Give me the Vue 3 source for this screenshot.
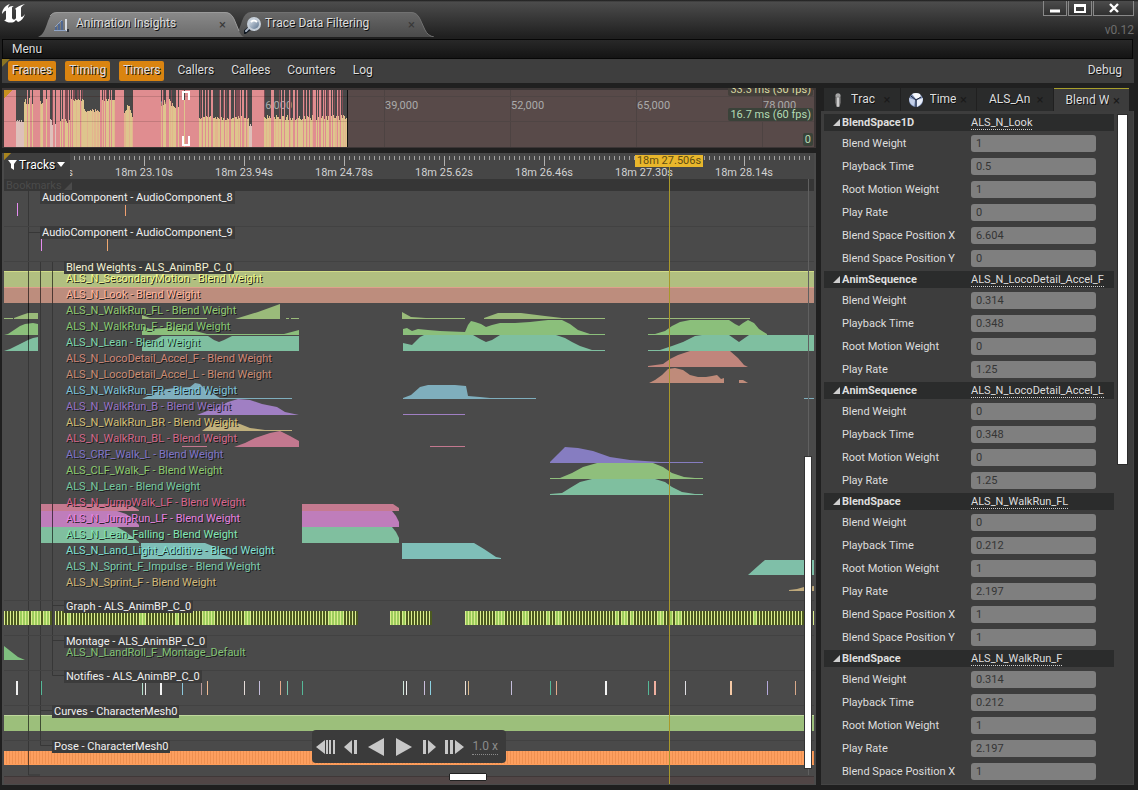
<script setup>
import { ref } from 'vue'

const toolbar = ref([
  { name: 'Frames', on: true },
  { name: 'Timing', on: true },
  { name: 'Timers', on: true },
  { name: 'Callers', on: false },
  { name: 'Callees', on: false },
  { name: 'Counters', on: false },
  { name: 'Log', on: false },
])

/* ---- frame overview: one-pixel columns, either over budget or within it ---- */
const frameSections = [
  [0, 12, 0.95, 30, 2], [12, 20, 0, 30, 2, 'pale'], [20, 46, 0.6, 8, 6], [46, 52, 0.3, 28, 8, 'pale'],
  [52, 67, 0.55, 28, 6], [67, 80, 0.35, 8, 3], [80, 96, 0.05, 19, 3], [96, 98, 1, 8, 1],
  [98, 111, 0.3, 9, 3], [111, 122, 0.85, 20, 10], [122, 131, 0.05, 15, 12], [131, 157, 1, 0, 1],
  [157, 178, 0.45, 8, 10], [178, 195, 0.85, 8, 3], [195, 245, 0.38, 26, 4], [245, 248, 0, 32, 5, 'pale'],
  [248, 260, 0.75, 22, 4], [260, 344, 0.26, 25, 5],
]
const columns = []
let seed = 11
const rand = () => {
  seed = (seed * 16807) % 2147483647
  return seed / 2147483647
}
for (const [from, to, share, top, spread, tone] of frameSections) {
  for (let x = from; x < to; x++) {
    const y = Math.round(top + rand() * spread)
    if (rand() < share) columns.push({ x, y: 0, c: '#e08d90' })
    else {
      columns.push({ x, y, c: tone ? '#dec0bb' : rand() < 0.3 ? '#e3b58d' : '#dec58d' })
      if (share > 0.25 && rand() < 0.25) columns.push({ x, y: 0, h: y, c: '#7d4c54' })
    }
  }
}
const overviewMarks = [
  { x: 129, t: '13,000' }, { x: 255, t: '26,000' }, { x: 381, t: '39,000' },
  { x: 507, t: '52,000' }, { x: 633, t: '65,000' }, { x: 759, t: '78,000' },
]

/* ---- time ruler ---- */
const minorTicks = Array.from({ length: 148 }, (_, i) => 70 + i * 5)
const majorTicks = [
  [40, '18m 22.26s'], [140, '18m 23.10s'], [240, '18m 23.94s'], [340, '18m 24.78s'], [440, '18m 25.62s'],
  [540, '18m 26.46s'], [640, '18m 27.30s'], [740, '18m 28.14s'],
]

/* ---- blend weight curves: [time px, height] pairs, one list per continuous run ---- */
const curves = [
  { name: 'ALS_N_SecondaryMotion', c: '#b1bf80', t: '#f2fa8c', full: true },
  { name: 'ALS_N_Look', c: '#bd8d7d', t: '#ffb59c', full: true },
  { name: 'ALS_N_WalkRun_FL', c: '#9abb7a', t: '#8fc972', runs: [
    [[4, 1], [13, 1]], [[14, 1], [22, 4], [28, 6], [38, 6]], [[142, 4], [150, 1], [207, 1]],
    [[235, 0], [258, 7], [280, 15]], [[286, 1], [289, 1]], [[291, 1], [299, 1]],
    [[402, 7], [411, 2], [426, 1], [465, 1]], [[484, 1], [498, 6], [521, 6], [545, 3], [562, 1], [605, 1]],
    [[648, 1], [750, 1]]] },
  { name: 'ALS_N_WalkRun_F', c: '#8bbf7b', t: '#86c873', runs: [
    [[4, 0], [8, 1], [14, 5], [20, 9], [25, 11], [33, 12], [38, 11]],
    [[142, 9], [150, 6], [165, 7], [178, 8], [195, 4], [207, 1], [284, 1], [299, 5]],
    [[403, 6], [407, 7], [412, 4], [418, 6], [428, 5], [440, 4], [465, 3], [468, 10], [471, 14], [475, 13],
      [481, 11], [486, 8], [492, 10], [500, 12], [515, 12], [530, 13], [548, 15], [562, 15], [570, 11], [578, 5], [590, 1], [605, 1]],
    [[648, 1], [655, 1], [665, 4], [672, 9], [680, 13], [690, 15], [729, 15], [735, 11], [739, 9], [743, 12],
      [748, 15], [754, 12], [759, 6], [767, 1]]] },
  { name: 'ALS_N_Lean', c: '#7fbfa0', t: '#7ed8ae', runs: [
    [[4, 0], [10, 2], [18, 6], [28, 11], [33, 13], [38, 14]],
    [[142, 9], [145, 9], [150, 7], [155, 11], [162, 15], [208, 15], [214, 11], [219, 9], [224, 11], [232, 15], [299, 15]],
    [[403, 8], [412, 6], [420, 14], [424, 16], [473, 16], [480, 12], [486, 9], [492, 11], [500, 16], [556, 16],
      [565, 13], [572, 9], [580, 5], [592, 1], [605, 1]],
    [[648, 1], [660, 1], [672, 5], [683, 9], [695, 15], [702, 16], [729, 16], [739, 9], [749, 16], [4000, 16]]] },
  { name: 'ALS_N_LocoDetail_Accel_F', c: '#c0857c', t: '#cf8778', runs: [
    [[648, 1], [663, 3], [670, 8], [678, 12], [690, 16], [730, 16], [738, 9], [744, 2], [748, 0]]] },
  { name: 'ALS_N_LocoDetail_Accel_L', c: '#bf8b7a', t: '#c98d75', runs: [
    [[649, 0], [655, 3], [662, 8], [668, 14], [675, 15], [683, 13], [690, 8], [698, 6], [706, 6], [712, 7],
      [717, 8], [721, 4], [724, 5]], [[739, 3], [743, 3], [748, 0]]] },
  { name: 'ALS_N_WalkRun_FR', c: '#7faebd', t: '#7cc3da', runs: [
    [[142, 0], [152, 5], [160, 9], [175, 11], [190, 12], [195, 16], [200, 15], [205, 10], [212, 6], [220, 1], [292, 1]],
    [[403, 1], [411, 4], [420, 12], [428, 14], [455, 14], [466, 13], [468, 3], [480, 2], [490, 1], [536, 1]],
    [[804, 1], [4000, 1]]] },
  { name: 'ALS_N_WalkRun_B', c: '#a07fc3', t: '#9673c4', runs: [
    [[197, 0], [207, 4], [218, 8], [228, 13], [238, 16], [250, 15], [262, 11], [277, 8], [285, 3], [299, 0]],
    [[403, 1], [465, 1]]] },
  { name: 'ALS_N_WalkRun_BR', c: '#c0b07d', t: '#d2bf77', runs: [
    [[202, 0], [210, 6], [215, 8], [232, 9], [240, 7], [250, 3], [265, 1], [292, 1]]] },
  { name: 'ALS_N_WalkRun_BL', c: '#c3788f', t: '#d2688b', runs: [
    [[182, 1], [207, 1]], [[234, 0], [245, 4], [255, 9], [270, 14], [280, 16], [290, 11], [299, 6]],
    [[430, 1], [465, 1]]] },
  { name: 'ALS_CRF_Walk_L', c: '#867dc1', t: '#7f75c9', runs: [
    [[550, 1], [558, 9], [565, 16], [578, 15], [593, 12], [610, 6], [630, 3], [660, 1], [703, 1]]] },
  { name: 'ALS_CLF_Walk_F', c: '#8fbf7c', t: '#8ccb71', runs: [
    [[550, 1], [560, 1], [572, 6], [583, 12], [597, 16], [653, 16], [663, 12], [672, 6], [684, 2], [695, 1], [703, 1]]] },
  { name: 'ALS_N_Lean', c: '#7fbf9f', t: '#76c9a0', runs: [
    [[550, 1], [562, 2], [570, 7], [580, 13], [592, 16], [655, 16], [665, 13], [672, 8], [682, 3], [695, 1], [703, 1]]] },
  { name: 'ALS_N_JumpWalk_LF', c: '#c57a90', t: '#d8658e', runs: [
    [[41, 7], [125, 7], [132, 5], [139, 1]], [[302, 7], [393, 7], [399, 3]]] },
  { name: 'ALS_N_JumpRun_LF', c: '#bf7dbb', t: '#e682e0', runs: [
    [[41, 16], [117, 16], [126, 13], [132, 9], [139, 2]], [[302, 16], [392, 16], [396, 11], [399, 5]]] },
  { name: 'ALS_N_Lean_Falling', c: '#80bf9f', t: '#80e6b4', runs: [
    [[41, 16], [117, 16], [126, 11], [139, 1]], [[302, 16], [392, 16], [396, 11], [399, 5]]] },
  { name: 'ALS_N_Land_Light_Additive', c: '#7fbfb8', t: '#80e0d4', runs: [
    [[141, 16], [205, 16], [215, 12], [224, 4], [233, 0]], [[402, 16], [474, 16], [484, 10], [496, 2], [501, 1]]] },
  { name: 'ALS_N_Sprint_F_Impulse', c: '#7fbfa8', t: '#7ccdae', runs: [
    [[748, 0], [758, 9], [765, 15], [4000, 16]]] },
  { name: 'ALS_N_Sprint_F', c: '#bfa97b', t: '#d1b87a', runs: [
    [[789, 1], [797, 2], [804, 4], [814, 5]]] },
]
const area = (run) => {
  const first = run[0][0]
  const last = run[run.length - 1][0]
  return `M${first} 16 ` + run.map(([x, h]) => `L${x} ${16 - h}`).join(' ') + ` L${last} 16 Z`
}

/* ---- graph events ---- */
const graphRuns = [[4, 50], [55, 358], [390, 432], [465, 806], [813, 815]]
const busy = [[18, 27], [31, 40], [43, 48], [66, 69], [138, 143], [174, 176], [200, 212], [242, 250], [266, 268],
  [328, 343], [390, 398], [401, 404], [409, 411], [465, 475], [495, 503], [520, 528], [546, 548], [553, 560],
  [615, 617], [620, 625], [629, 631], [657, 661], [668, 670], [673, 680], [742, 744], [752, 754]]
const graphTicks = []
for (const [a, b] of graphRuns) {
  for (let x = a; x < b; x += 3) {
    graphTicks.push({ x, busy: busy.some(([s, e]) => x >= s && x < e) })
  }
}

/* ---- notifies: position, width, colour ---- */
const notifies = [
  [16, 2, '#f0f0f0'], [41, 1, '#55b898'], [142, 1, '#b5e3cf'], [145, 1, '#e6e6e6'], [160, 2, '#f4f4f4'],
  [182, 1, '#8cc8dc'], [201, 1, '#b99a9a'], [207, 1, '#eebb92'], [244, 1, '#e4dbd8'], [259, 1, '#c4bddb'],
  [280, 1, '#e4a98b'], [287, 1, '#7ac6ae'], [302, 1, '#55b898'], [403, 1, '#d0e6da'], [406, 1, '#eee'],
  [424, 1, '#c9bddb'], [430, 1, '#8cd0e0'], [465, 1, '#eae0d8'], [468, 1, '#d9b78a'], [511, 1, '#c4bddb'],
  [550, 1, '#55b898'], [556, 1, '#e4a98b'], [605, 2, '#f4f4f4'], [648, 1, '#55b898'], [654, 2, '#f0b0a0'],
  [685, 1, '#e0dfe4'], [730, 2, '#f5c9a5'], [767, 1, '#b5a9dc'], [795, 1, '#d9a98a'],
]

/* ---- details ---- */
const groups = ref([
  { kind: 'BlendSpace1D', asset: 'ALS_N_Look', v: ['1', '0.5', '1', '0', '6.604', '0'] },
  { kind: 'AnimSequence', asset: 'ALS_N_LocoDetail_Accel_F', v: ['0.314', '0.348', '0', '1.25'] },
  { kind: 'AnimSequence', asset: 'ALS_N_LocoDetail_Accel_L', v: ['0', '0.348', '0', '1.25'] },
  { kind: 'BlendSpace', asset: 'ALS_N_WalkRun_FL', v: ['0', '0.212', '1', '2.197', '1', '1'] },
  { kind: 'BlendSpace', asset: 'ALS_N_WalkRun_F', v: ['0.314', '0.212', '1', '2.197', '1'] },
])
const fieldNames = ['Blend Weight', 'Playback Time', 'Root Motion Weight', 'Play Rate', 'Blend Space Position X', 'Blend Space Position Y']
</script>

<template>
  <div class="window">
    <header class="titlebar">
      <svg class="logo" width="26" height="22" viewBox="0 0 26 22" aria-hidden="true">
        <path fill="#fff" d="M9 1 C5 2 1 6 1 11 C3 8 5 7 5 8 V15 C5 17 4 17 3 17 C6 20 10 20 13 19 L15 17 L17 19 C20 18 23 15 24 11 C22 14 20 15 20 13 V5 C20 4 22 2 24 1 C19 2 16 4 14 6 C15 6 15 7 15 8 V15 C14 17 12 17 11 15 V5 C11 4 12 3 13 3 C11 3 9 3 7 5 C7 3 8 2 9 1Z" />
      </svg>
      <nav class="tabs">
        <div class="tab back">
          <svg class="tab-shape" width="202" height="25" aria-hidden="true">
            <path fill="url(#tabBack)" d="M0 25 C5 23 7 18 10 9 Q13 0 19 0 H179 Q185 0 188 7 L193 18 Q196 24 202 25Z" />
            <path fill="none" stroke="#717171" d="M19 .5 H179 Q185 .5 188 7 L193 18 Q196 24 202 25" />
          </svg>
          <svg class="tab-icon" width="18" height="18" viewBox="0 0 18 18" aria-hidden="true">
            <path d="M1 16 L6 12" stroke="#101820" stroke-width="4" stroke-linecap="round" />
            <path d="M2 15 L6 11" stroke="#a9b4c4" stroke-width="2" stroke-linecap="round" />
            <circle cx="10" cy="8" r="6" fill="url(#lens)" stroke="#c5ced8" stroke-width="2" />
            <path d="M7 6 Q10 3 13 6" stroke="#fff" stroke-width="2" fill="none" />
          </svg>
          <button class="tab-name">Trace Data Filtering</button>
          <button class="close" aria-label="Close Trace Data Filtering">×</button>
        </div>
        <div class="tab front">
          <svg class="tab-shape" width="206" height="25" aria-hidden="true">
            <defs>
              <linearGradient id="tabFront" x2="0" y2="1"><stop stop-color="#8a8a8a" /><stop offset="1" stop-color="#6b6b6b" /></linearGradient>
              <linearGradient id="tabBack" x2="0" y2="1"><stop stop-color="#686868" /><stop offset="1" stop-color="#4a4a4a" /></linearGradient>
              <linearGradient id="lens" x2="1" y2="1"><stop stop-color="#eef4fa" /><stop offset="1" stop-color="#4f6784" /></linearGradient>
            </defs>
            <path fill="url(#tabFront)" d="M0 25 C5 23 7 18 10 9 Q13 0 19 0 H187 Q193 0 196 7 L201 19 Q203 24 206 25Z" />
            <path fill="none" stroke="#9a9a9a" d="M12 4 Q14 .5 19 .5 H187 Q193 .5 196 7 L201 19" />
          </svg>
          <svg class="tab-icon" width="16" height="16" viewBox="0 0 16 16" aria-hidden="true">
            <path d="M2 14 V10 M5 14 V7 M8 14 V4" stroke="#4f6790" stroke-width="2" />
            <path d="M12 14 V2" stroke="#d5dae2" stroke-width="2" />
            <path d="M1 10 L8 3 M0 13.5 H12" stroke="#8fa4c6" />
            <path d="M14 12 V15" stroke="#2a2f38" stroke-width="2" />
          </svg>
          <button class="tab-name">Animation Insights</button>
          <button class="close" aria-label="Close Animation Insights">×</button>
        </div>
      </nav>
      <div class="corner">
        <div class="window-buttons">
          <button aria-label="Minimize"><svg width="12" height="10"><path d="M1 8 H11" stroke="#fff" stroke-width="3" /></svg></button>
          <button aria-label="Maximize"><svg width="12" height="10"><path d="M0 2.5 H12" stroke="#fff" stroke-width="3" /><path d="M1 1 V9 H11 V1" fill="none" stroke="#fff" stroke-width="2" /></svg></button>
          <button class="wide" aria-label="Close"><svg width="12" height="10"><path d="M2 1 L10 9 M10 1 L2 9" stroke="#fff" stroke-width="2.4" /></svg></button>
        </div>
        <span class="version">v0.12</span>
      </div>
    </header>

    <div class="menubar"><button>Menu</button></div>

    <div class="toolbar">
      <button v-for="b in toolbar" :key="b.name" :class="{ on: b.on }" :aria-pressed="b.on" @click="b.on = !b.on">{{ b.name }}</button>
      <button class="debug">Debug</button>
    </div>

    <div class="body">
      <main class="left">
        <section class="overview">
          <svg width="100%" height="57" aria-hidden="true">
            <rect x="344" width="100%" height="57" fill="#584a49" />
            <rect width="344" height="57" fill="#484848" />
            <path v-for="m in overviewMarks" :key="m.t" :d="`M${m.x - 1}.5 0 V57`" stroke="#4d4342" />
            <path d="M0 6.5 H4000 M0 31.5 H4000" stroke="#4f4544" />
          </svg>
          <span v-for="m in overviewMarks" :key="m.t" class="overview-mark" :style="{ left: m.x + 'px' }">{{ m.t }}</span>
          <svg class="columns" width="344" height="57" shape-rendering="crispEdges" aria-hidden="true">
            <rect v-for="(c, i) in columns" :key="i" :x="c.x" :y="c.y" width="1" :height="c.h || 57 - c.y" :fill="c.c" />
            <path d="M0 6.5 H344 M0 31.5 H344" stroke="#0002" />
            <path d="M343.5 0 V57" stroke="#111" />
            <path d="M179 10 V2 H185 V10 M179 46 V55 H185 V46" stroke="#fff" stroke-width="2" fill="none" />
            <path d="M0 0 H9 L0 8Z" fill="#c8901e" />
          </svg>
          <div class="limits">
            <span class="limit high">33.3 ms (30 fps)</span>
            <span class="limit">16.7 ms (60 fps)</span>
            <span class="limit zero">0</span>
          </div>
        </section>

        <section class="timeline">
          <div class="ruler">
            <svg width="100%" height="26" shape-rendering="crispEdges" aria-hidden="true">
              <rect v-for="x in minorTicks" :key="x" :x="x" y="3" width="1" height="4" fill="#a0a0a0" />
              <rect v-for="m in majorTicks" :key="m[1]" :x="m[0]" y="3" width="1" height="10" fill="#b0b0b0" />
            </svg>
            <span v-for="m in majorTicks" :key="m[1]" class="time" :style="{ left: m[0] + 'px' }">{{ m[1] }}</span>
            <button class="tracks-button">
              <svg width="9" height="10" aria-hidden="true"><path d="M0 0 H9 L6 4 V10 L3 8 V4Z" fill="#fff" /></svg>
              Tracks
              <svg width="8" height="5" aria-hidden="true"><path d="M0 0 H8 L4 5Z" fill="#fff" /></svg>
            </button>
          </div>
          <div class="bookmarks">Bookmarks<i></i></div>

          <div class="tracks">
            <svg class="guides" width="60" height="586" aria-hidden="true">
              <path d="M24.5 0 V584 H36 M24.5 41.5 H36 M36.5 70 V554.5 H48 M36.5 519.5 H48 M48.5 70 V484.5 H60 M48.5 449.5 H60 M48.5 414.5 H60 M24.5 70.5 H48" stroke="#373737" fill="none" />
            </svg>
            <div class="track depth-1">
              <span class="name">AudioComponent - AudioComponent_8</span>
              <svg class="strip" width="100%" height="14" shape-rendering="crispEdges"><rect x="13" y="1" width="1" height="13" fill="#e58cf0" /><rect x="121" y="3" width="1" height="11" fill="#f0a070" /></svg>
            </div>
            <div class="track depth-1">
              <span class="name">AudioComponent - AudioComponent_9</span>
              <svg class="strip" width="100%" height="14" shape-rendering="crispEdges"><rect x="37" y="2" width="1" height="12" fill="#e58cf0" /><rect x="103" y="2" width="1" height="12" fill="#f0a870" /></svg>
            </div>
            <div class="track graph-track depth-3">
              <span class="name cream">Blend Weights - ALS_AnimBP_C_0</span>
              <div class="curves">
                <div v-for="(c, i) in curves" :key="i" class="curve">
                  <svg width="100%" height="16" aria-hidden="true">
                    <rect v-if="c.full" width="100%" height="16" :fill="c.c" />
                    <path v-if="c.full" d="M0 .5 H4000" :stroke="c.t" stroke-opacity=".5" />
                    <g v-else transform="translate(-4)">
                      <path v-for="(r, k) in c.runs" :key="k" :d="area(r)" :fill="c.c" />
                    </g>
                  </svg>
                  <span :style="{ color: c.t }">{{ c.name }} - Blend Weight</span>
                </div>
              </div>
            </div>
            <div class="track depth-3">
              <span class="name">Graph - ALS_AnimBP_C_0</span>
              <svg class="strip" width="100%" height="14" shape-rendering="crispEdges" aria-hidden="true">
                <g transform="translate(-4)">
                  <template v-for="t in graphTicks" :key="t.x">
                    <rect :x="t.x" width="3" height="14" :fill="t.busy ? '#9ccc5c' : '#4c5a20'" />
                    <rect :x="t.x" width="1" height="14" fill="#dcee90" />
                  </template>
                </g>
              </svg>
            </div>
            <div class="track depth-3">
              <span class="name">Montage - ALS_AnimBP_C_0</span>
              <svg class="strip" width="100%" height="14"><path d="M0 0 L14 11 L21 14 H0Z" fill="#7fbf7f" /></svg>
              <span class="montage">ALS_N_LandRoll_F_Montage_Default</span>
            </div>
            <div class="track depth-3">
              <span class="name">Notifies - ALS_AnimBP_C_0</span>
              <svg class="strip" width="100%" height="14" shape-rendering="crispEdges" aria-hidden="true">
                <g transform="translate(-4)"><rect v-for="n in notifies" :key="n[0]" :x="n[0]" :width="n[1]" height="14" :fill="n[2]" /></g>
              </svg>
            </div>
            <div class="track depth-2">
              <span class="name">Curves - CharacterMesh0</span>
              <div class="band green"></div>
            </div>
            <div class="track depth-2">
              <span class="name">Pose - CharacterMesh0</span>
              <div class="band orange"></div>
            </div>
            <svg class="guides over" width="60" height="586" aria-hidden="true">
              <path d="M24.5 80 V112 M36.5 80 V112 M48.5 80 V112 M24.5 112 V160 M48.5 313 V352 M24.5 524 V540 M36.5 524 V540 M24.5 560 V574" stroke="#000" stroke-opacity=".6" />
            </svg>
          </div>
          <div class="footer-strip"></div>

          <div class="cursor-line"></div>
          <span class="cursor-time">18m 27.506s</span>
          <div class="v-rail"></div>
          <div class="v-thumb"></div>
          <div class="h-thumb"></div>

          <div class="transport">
            <button aria-label="Step back several frames"><svg width="20" height="16"><path d="M9 1 V15 L0 8Z" /><path d="M10 1h2v14h-2zM13 1h2v14h-2zM17 1h2v14h-2z" /></svg></button>
            <button aria-label="Step back"><svg width="14" height="16"><path d="M8 1 V15 L0 8Z" /><path d="M10 1h3v14h-3z" /></svg></button>
            <button class="big" aria-label="Play backwards"><svg width="16" height="18"><path d="M16 0 V18 L0 9Z" /></svg></button>
            <button class="big" aria-label="Play"><svg width="16" height="18"><path d="M0 0 V18 L16 9Z" /></svg></button>
            <button aria-label="Step forward"><svg width="14" height="16"><path d="M6 1 V15 L14 8Z" /><path d="M1 1h3v14h-3z" /></svg></button>
            <button aria-label="Step forward several frames"><svg width="20" height="16"><path d="M11 1 V15 L20 8Z" /><path d="M1 1h3v14h-3zM6 1h3v14h-3z" /></svg></button>
            <button class="speed">1.0 x</button>
          </div>
        </section>
      </main>

      <aside class="right">
        <nav class="side-tabs">
          <div class="side-tab">
            <svg width="12" height="18" viewBox="0 0 14 18" aria-hidden="true"><circle cx="7" cy="4" r="3" fill="#a5a5a5" /><path d="M4 6 Q7 4 10 6 V12 L9 17 H5 L4 12Z" fill="#858585" /><path d="M6 6h2v11h-2z" fill="#d8d8d8" /></svg>
            <button>Trac</button><b>×</b>
          </div>
          <div class="side-tab">
            <svg width="14" height="14" viewBox="0 0 14 14" aria-hidden="true"><circle cx="7" cy="7" r="7" fill="#7f93bd" /><path d="M3 1 Q7 -1 11 1 L12 4 L7 6Z" fill="#f7f8fb" /><path d="M0 5 L6 7 L5 13 Q0 11 0 5Z" fill="#c4d0e8" /><path d="M8 7 L14 5 Q14 11 8 14Z" fill="#e9eef8" /><path d="M2 3 L7 7 L12 4 M7 7 V14" stroke="#1b2030" stroke-width="1" fill="none" /></svg>
            <button>Time</button><b>×</b>
          </div>
          <div class="side-tab"><button class="plain">ALS_An</button><b>×</b></div>
          <div class="side-tab active"><button class="plain">Blend W</button><b>×</b></div>
        </nav>
        <div class="details">
          <div class="list">
            <section v-for="(g, gi) in groups" :key="gi">
              <h3>
                <svg width="7" height="7" aria-hidden="true"><path d="M7 0 V7 H0Z" fill="#cfcfcf" /></svg>
                <span>{{ g.kind }}</span>
                <a href="#">{{ g.asset }}</a>
              </h3>
              <div v-for="(v, i) in g.v" :key="i" class="field">
                <label :for="`f${gi}-${i}`">{{ fieldNames[i] }}</label>
                <input :id="`f${gi}-${i}`" v-model="g.v[i]" type="text" />
              </div>
            </section>
          </div>
          <div class="details-thumb"></div>
        </div>
      </aside>
    </div>
  </div>
</template>

<style>
body { background: #1c1c1c; overflow: hidden; }
</style>

<style scoped>
.window {
  height: 100vh;
  box-sizing: border-box;
  padding: 0 4px 5px 2px;
  display: flex;
  flex-direction: column;
  background: linear-gradient(#1a1a1a 0, #4c4c4c 2px, #1f1f1f 37px);
  font-family: Roboto, "Noto Sans", sans-serif;
  font-size: 11px;
  font-kerning: none;
  color: #dedede;
}
.window * { box-sizing: border-box; }
svg { display: block; flex: none; }
button {
  font: inherit;
  font-kerning: none;
  color: inherit;
  text-shadow: inherit;
  background: none;
  border: 0;
  padding: 0;
}

.titlebar { height: 39px; flex: none; display: flex; align-items: flex-start; }
.logo { margin: 3px 8px 0 -1px; }
.tabs { display: flex; flex-direction: row-reverse; padding-top: 12px; margin-left: 3px; }
.tab {
  position: relative;
  height: 25px;
  display: flex;
  align-items: center;
  font-size: 12px;
  color: #ddd;
  text-shadow: 1px 1px 0 #111;
}
.tab > * { position: relative; }
.tab .tab-shape { position: absolute; left: 0; top: 0; }
.tab.front { width: 194px; padding-left: 16px; z-index: 1; }
.tab.back { width: 202px; padding-left: 12px; }
.tab-name { margin-left: 6px; padding-bottom: 3px; }
.back .tab-name { margin-left: 3px; }
.close { margin-left: auto; margin-right: 6px; padding-bottom: 1px; font-size: 13px; color: #383838; text-shadow: none; }
.back .close { margin-right: 19px; }
.corner { margin-left: auto; display: flex; flex-direction: column; align-items: flex-end; }
.window-buttons { display: flex; gap: 1px; padding-top: 1px; }
.window-buttons button {
  width: 24px;
  height: 15px;
  display: flex;
  justify-content: center;
  align-items: center;
  border: 1px solid #888;
  border-top: 0;
  background: linear-gradient(#4c4c4c, #303030);
}
.window-buttons .wide { width: 41px; }
.version { margin-top: 6px; font-size: 12px; line-height: 16px; color: #6d6d6d; }

.menubar {
  height: 20px;
  flex: none;
  margin-right: 1px;
  padding-left: 9px;
  border: 1px solid #070707;
  background: linear-gradient(#282828, #141414);
  font-size: 12px;
  line-height: 18px;
  text-shadow: 1px 1px 0 #000;
}
.toolbar {
  height: 24px;
  flex: none;
  display: flex;
  align-items: center;
  padding: 0 8px 1px 6px;
  background: linear-gradient(135deg, #8b7423 5px, #3e3e3e 6px);
  font-size: 12px;
  text-shadow: 1px 1px 0 #111;
}
.toolbar button { height: 20px; padding: 0 4px 2px; margin-right: 9px; border-radius: 2px; }
.toolbar button.on { background: #da8410; }
.toolbar .debug { margin: 0 0 0 auto; }

.body { flex: 1; min-height: 0; display: flex; gap: 5px; padding-top: 5px; background: #202020; }
.left { flex: 1; min-width: 0; display: flex; flex-direction: column; gap: 5px; }
.overview {
  position: relative;
  height: 60px;
  flex: none;
  padding: 2px;
  overflow: hidden;
  background: #3c3636;
}
.columns { position: absolute; left: 2px; top: 2px; }
.overview-mark { position: absolute; top: 11px; margin-left: 2px; line-height: 14px; font-size: 11px; color: #aaa; }
.limits {
  position: absolute;
  right: 3px;
  top: -5px;
  display: flex;
  flex-direction: column;
  align-items: flex-end;
  font-size: 11px;
  line-height: 13px;
  color: #b5dcb5;
}
.limit { padding: 0 2px; background: #3a4239; border-radius: 2px; }
.limit.high { color: #d9d9a0; background: #433f3a; margin-bottom: 12px; }
.zero { margin-top: 12px; }

.timeline {
  position: relative;
  flex: 1;
  min-height: 0;
  padding: 0 2px 1px;
  display: flex;
  flex-direction: column;
  background: #4a4a4a;
  overflow: hidden;
}
.ruler { position: relative; height: 26px; flex: none; background: #464646; overflow: hidden; }
.time {
  position: absolute;
  top: 13px;
  width: 80px;
  margin-left: -40px;
  text-align: center;
  font-size: 11px;
  line-height: 13px;
  color: #d2d2d2;
}
.tracks-button {
  position: absolute;
  left: -2px;
  top: 0;
  height: 26px;
  width: 68px;
  padding: 0 0 3px 6px;
  display: flex;
  align-items: center;
  gap: 2px;
  background: linear-gradient(135deg, #a8841e 6px, #3e3e3e 7px);
  font-size: 12px;
  color: #fff;
  text-shadow: 1px 1px 0 #000;
}
.bookmarks {
  height: 12px;
  flex: none;
  padding-left: 2px;
  background: #363636;
  color: #4b4b4b;
  line-height: 14px;
  font-size: 11px;
  display: flex;
  gap: 2px;
  overflow: hidden;
}
.bookmarks i { margin-top: 3px; border: 4px solid; border-color: transparent #4b4b4b #4b4b4b transparent; height: 0; }
.tracks { position: relative; flex: 1; min-height: 0; overflow: hidden; }
.guides { position: absolute; left: 0; top: 0; }
.track { position: relative; height: 35px; border-top: 1px solid #424242; }
.track:first-of-type { border-color: transparent; }
.track.graph-track { height: 339px; }
.name {
  position: absolute;
  z-index: 2;
  top: -1px;
  left: 36px;
  padding: 0 2px;
  background: #3b3b3b;
  line-height: 13px;
  color: #f0f0f0;
}
.depth-2 .name { left: 48px; }
.depth-3 .name { left: 60px; }
.name.cream { color: #f4f2d4; }
.strip { position: absolute; left: 0; top: 10px; }
.curves { padding-top: 9px; }
.curve { position: relative; height: 16px; }
.curve span, .montage {
  position: absolute;
  left: 62px;
  top: 0;
  line-height: 16px;
  white-space: nowrap;
  text-shadow: 1px 1px 0 #1a1a1a;
}
.montage { top: 9px; color: #83c378; }
.band { position: absolute; left: 0; right: 0; top: 9px; height: 16px; }
.band.green { background: #9cbf7b; border-top: 1px solid #bfd79c; }
.band.orange {
  top: 10px;
  height: 14px;
  background: repeating-linear-gradient(90deg, #fd9f5f 0 2px, #ee9050 2px 3px);
  border-bottom: 1px solid #ff9c58;
}
.footer-strip { height: 8px; flex: none; background: #514646; border-top: 1px solid #403838; }

.cursor-line { position: absolute; left: 667px; top: 13px; bottom: 1px; width: 1px; background: #a8982a; }
.cursor-time {
  position: absolute;
  left: 633px;
  top: 2px;
  width: 68px;
  background: #e8b62c;
  color: #5f4c12;
  text-align: center;
  line-height: 12px;
}
.v-rail { position: absolute; right: 7px; top: 26px; bottom: 10px; width: 1px; background: #606060; }
.v-thumb {
  position: absolute;
  right: 4px;
  top: 303px;
  bottom: 16px;
  width: 8px;
  background: #fff;
  border: 1px solid #333;
}
.h-thumb { position: absolute; left: 447px; bottom: 4px; width: 38px; height: 8px; background: #fff; border: 1px solid #222; border-radius: 1px; }
.transport {
  position: absolute;
  left: 310px;
  bottom: 22px;
  height: 33px;
  width: 194px;
  padding: 0 8px 0 4px;
  display: flex;
  align-items: center;
  justify-content: space-between;
  background: #3b3b3b;
  border-radius: 4px;
}
.transport svg { fill: #c8c8c8; }
.transport .big { margin: 0 2px; }
.speed { font-size: 12px; line-height: 15px; color: #8b8b8b; border-bottom: 1px dotted #8b8b8b; }

.right { width: 313px; flex: none; display: flex; flex-direction: column; }
.side-tabs { height: 23px; flex: none; display: flex; gap: 1px; padding: 0 5px 0 3px; }
.side-tab {
  position: relative;
  flex: 1;
  min-width: 0;
  display: flex;
  align-items: center;
  padding: 0 9px 0 8px;
  background: #2a2b2b;
  font-size: 12px;
  text-shadow: 1px 1px 0 #111;
}
.side-tab button { margin-left: 7px; padding-bottom: 1px; white-space: nowrap; overflow: hidden; }
.side-tab button.plain { margin-left: 4px; }
.side-tab b { margin-left: auto; color: #1a1a1a; font-weight: 400; font-size: 13px; text-shadow: none; }
.side-tab.active { background: #3c3c3c; border-top: 1px solid #a89f2c; }
.details {
  flex: 1;
  min-height: 0;
  display: flex;
  padding: 3px 5px 3px 3px;
  background: #3d3d3d;
  border: 1px solid #444;
  border-width: 0 1px 1px 0;
}
.list { flex: 1; min-width: 0; overflow: hidden; }
.list h3 {
  height: 17px;
  margin: 0 0 1px;
  display: grid;
  grid-template-columns: 7px 127px 1fr;
  gap: 2px;
  align-items: center;
  padding-left: 9px;
  background: #2b2c2c;
  font-size: 11px;
  line-height: 14px;
}
.list section { padding-bottom: 1px; }
.list h3 a {
  justify-self: start;
  font-weight: 400;
  line-height: 13px;
  color: #dedede;
  text-decoration: none;
  border-bottom: 1px dotted #cfcfcf;
}
.field { height: 23px; display: grid; grid-template-columns: 129px 1fr; align-items: center; padding: 0 18px 0 18px; }
.field input {
  width: 100%;
  height: 17px;
  padding: 0 5px;
  border: 0;
  border-radius: 3px;
  background: #7f7f7f;
  color: #353535;
  font: inherit;
}
.details-thumb { width: 11px; height: 351px; margin-left: 3px; background: #fff; border: 1px solid #2c2c2c; }
</style>
